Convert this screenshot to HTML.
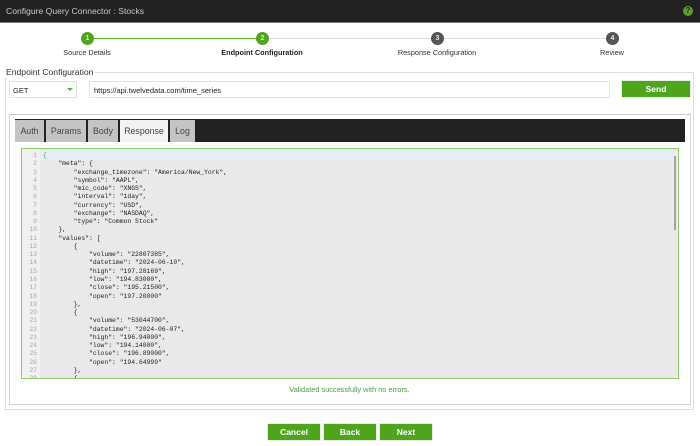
<!DOCTYPE html>
<html><head><meta charset="utf-8"><style>
*{box-sizing:border-box}
html,body{margin:0;padding:0;background:#fff}
body{width:700px;height:446px;position:relative;overflow:hidden;font-family:"Liberation Sans",sans-serif;color:#444}
.a{position:absolute}
.t{position:absolute;white-space:nowrap;filter:blur(.2px)}
.c{width:13px;height:13px;border-radius:50%;color:#e8e8e8;font:bold 7px/13px "Liberation Sans",sans-serif;text-align:center;top:32px}
.s{font-size:7.3px;line-height:10px;top:48px;transform:translateX(-50%);color:#333}
.tab{top:120px;height:22px;background:#c4c4c4;font-size:8.8px;line-height:22px;text-align:center;color:#444}
.b{background:#4fa41d;color:#fff;font-weight:bold;font-size:8.5px;text-align:center;border:1px solid #e4f0dc}
pre{margin:0;font-family:"Liberation Mono",monospace;font-size:6.4px;line-height:8.26px;color:#222}
</style></head><body>
<div class="a" style="left:0;top:0;width:700px;height:23px;background:#222;border-bottom:1px solid #777"></div>
<div class="t" style="left:6px;top:5px;font-size:8.6px;line-height:13px;color:#c8c8c8">Configure Query Connector : Stocks</div>
<div class="a" style="left:683px;top:6px;width:10px;height:10px;border-radius:50%;background:#5aa02c;color:#222;font:bold 8px/10px 'Liberation Sans',sans-serif;text-align:center">?</div>

<div class="a" style="left:87px;top:37.5px;width:175px;height:1.5px;background:#5fb12f"></div>
<div class="a" style="left:262px;top:37.5px;width:350px;height:1.5px;background:#ddd"></div>
<div class="a c" style="left:81px;background:#4fa41d">1</div>
<div class="a c" style="left:256px;background:#4fa41d">2</div>
<div class="a c" style="left:431px;background:#555">3</div>
<div class="a c" style="left:606px;background:#555">4</div>
<div class="t s" style="left:87px">Source Details</div>
<div class="t s" style="left:262px;font-weight:bold;color:#222">Endpoint Configuration</div>
<div class="t s" style="left:437px">Response Configuration</div>
<div class="t s" style="left:612px">Review</div>

<div class="a" style="left:5px;top:72px;width:689px;height:338px;border:1px solid #dcdce4"></div>
<div class="t" style="left:5px;top:66px;background:#fff;padding:0 2px 0 1px;font-size:8.6px;line-height:12px;color:#333">Endpoint Configuration</div>

<div class="a" style="left:9px;top:81px;width:68px;height:17px;border:1px solid #e2e2e2"></div>
<div class="t" style="left:13px;top:85px;font-size:7.5px;line-height:11px;color:#222">GET</div>
<div class="a" style="left:67px;top:88px;width:0;height:0;border-left:3px solid transparent;border-right:3px solid transparent;border-top:3px solid #5fb12f"></div>
<div class="a" style="left:89px;top:81px;width:521px;height:17px;border:1px solid #e2e2e2"></div>
<div class="t" style="left:94px;top:85px;font-size:7.5px;line-height:11px;color:#222">https://api.twelvedata.com/time_series</div>
<div class="a b" style="left:621px;top:80px;width:70px;height:18px;line-height:16px">Send</div>

<div class="a" style="left:9px;top:114px;width:682px;height:291px;border:1px solid #d4d4d4;border-top-color:#ccc"></div>
<div class="a" style="left:15px;top:119px;width:670px;height:23px;background:#222"></div>
<div class="t tab" style="left:15px;width:29px">Auth</div>
<div class="t tab" style="left:46px;width:40px">Params</div>
<div class="t tab" style="left:88px;width:30px">Body</div>
<div class="t tab" style="left:120px;width:48px;background:#f2f2f2">Response</div>
<div class="t tab" style="left:170px;width:25px">Log</div>

<div class="a" style="left:21px;top:148px;width:658px;height:231px;border:1px solid #8fcc6a;background:#e9e9e9;overflow:hidden">
<div class="a" style="left:0;top:0;width:18px;height:229px;background:#f0f0f0"></div>
<div class="a" style="left:18px;top:2px;width:638px;height:9px;background:#e3edfb"></div>
<div class="a" style="left:652px;top:7px;width:2px;height:74px;background:#a5a5a5"></div>
<pre class="a" style="left:0;top:3px;width:15px;text-align:right;color:#aaa">1
2
3
4
5
6
7
8
9
10
11
12
13
14
15
16
17
18
19
20
21
22
23
24
25
26
27
28</pre>
<pre class="a" style="left:21px;top:3px"><span style="color:#4fa41d">{</span>
    "meta": {
        "exchange_timezone": "America/New_York",
        "symbol": "AAPL",
        "mic_code": "XNGS",
        "interval": "1day",
        "currency": "USD",
        "exchange": "NASDAQ",
        "type": "Common Stock"
    },
    "values": [
        {
            "volume": "22807385",
            "datetime": "2024-06-10",
            "high": "197.28169",
            "low": "194.83000",
            "close": "195.21500",
            "open": "197.20000"
        },
        {
            "volume": "53044700",
            "datetime": "2024-06-07",
            "high": "196.94000",
            "low": "194.14000",
            "close": "196.89000",
            "open": "194.64999"
        },
        {</pre>
</div>
<div class="t" style="left:0;width:699px;top:385px;text-align:center;font-size:7.35px;line-height:10px;color:#4a9e4a">Validated successfully with no errors.</div>

<div class="a b" style="left:267px;top:423px;width:54px;height:18px;line-height:16px">Cancel</div>
<div class="a b" style="left:323px;top:423px;width:54px;height:18px;line-height:16px">Back</div>
<div class="a b" style="left:379px;top:423px;width:54px;height:18px;line-height:16px">Next</div>
</body></html>
